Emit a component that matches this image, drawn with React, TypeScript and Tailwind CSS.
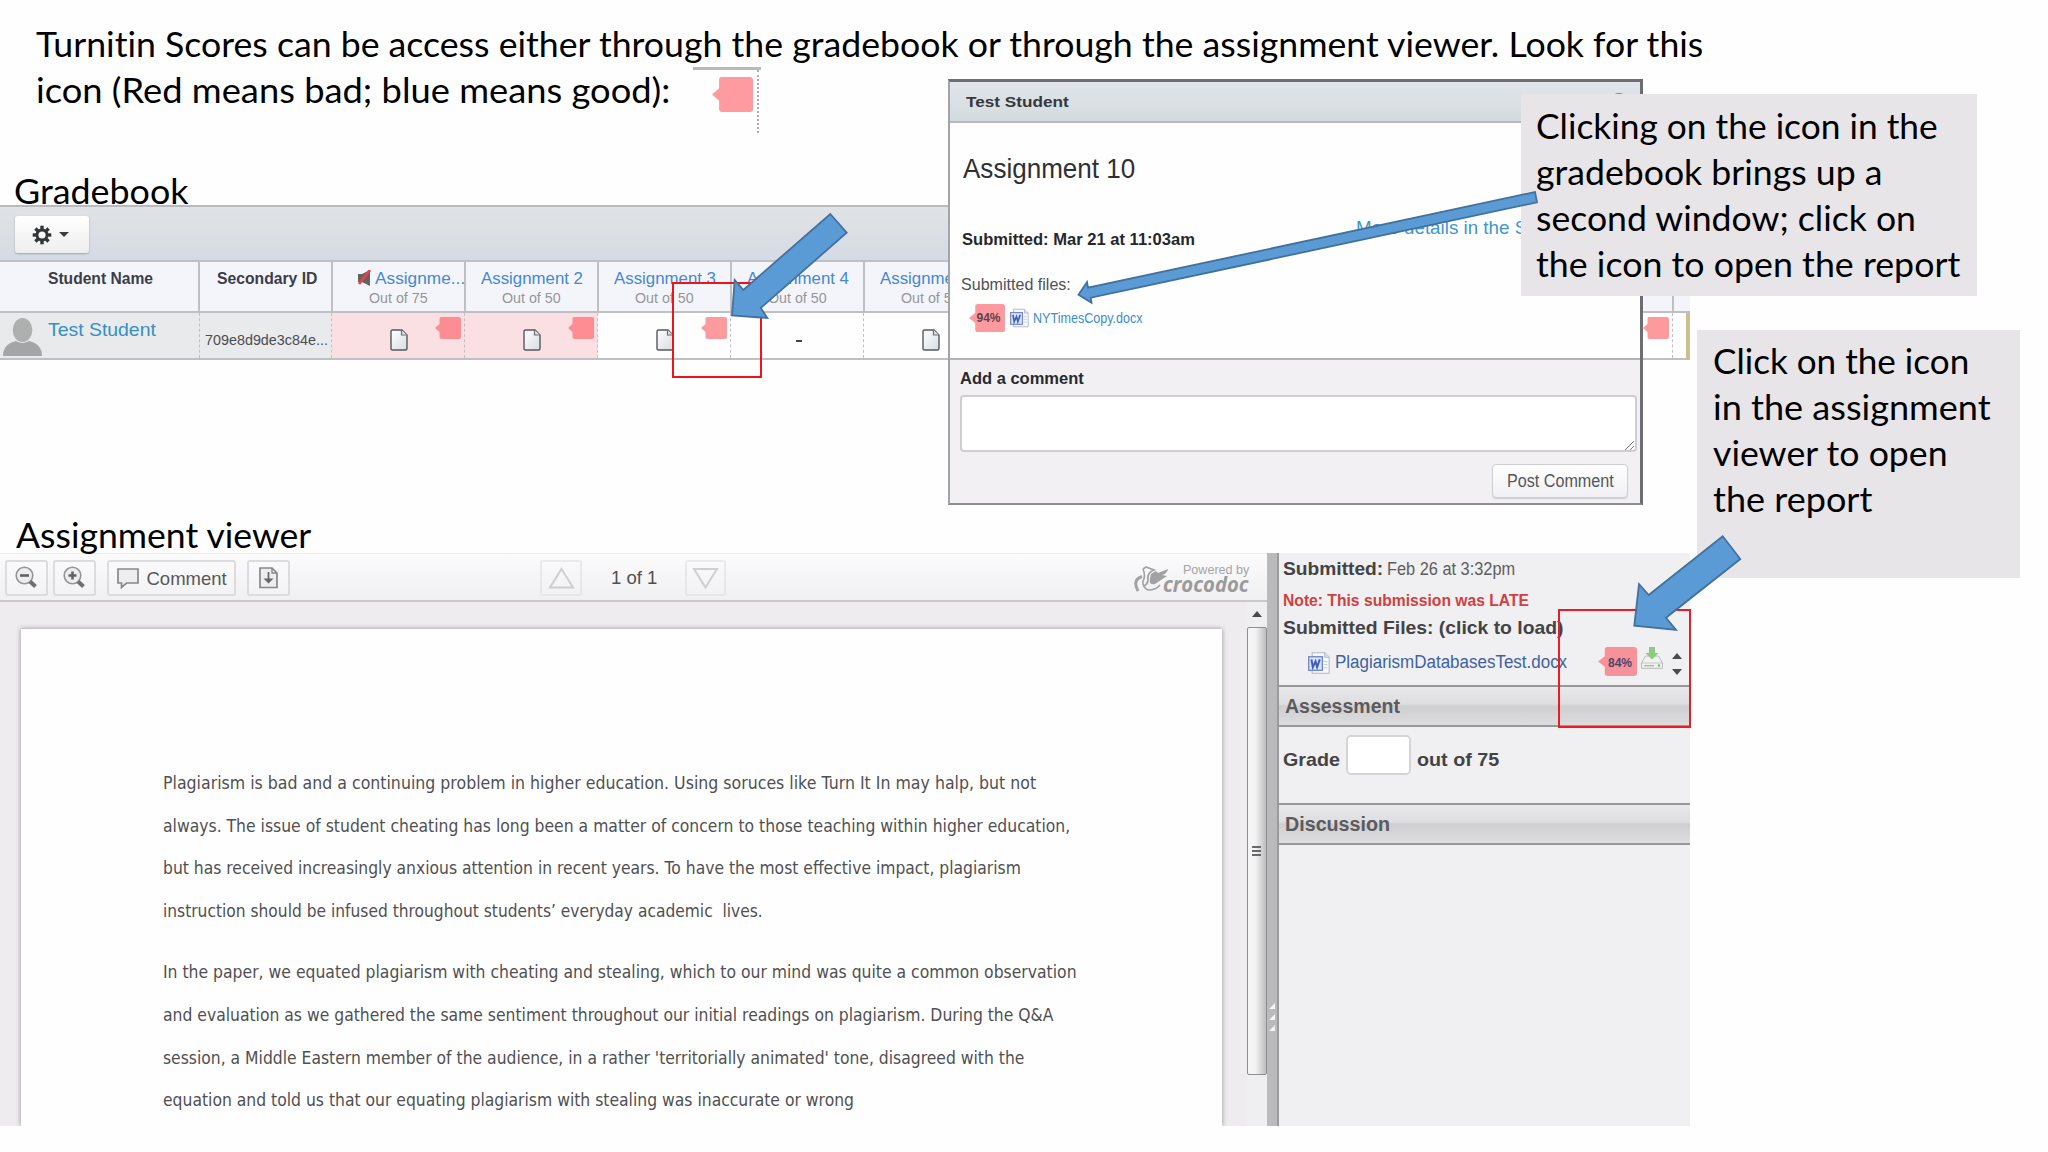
import { useLayoutEffect, useRef, useState } from "react";
import type { ReactNode } from "react";

/* One line of text stretched horizontally to a given width. */
function Fit({ w, className = "", children }: { w: number; className?: string; children: ReactNode }) {
  const ref = useRef<HTMLSpanElement>(null);
  const [scale, setScale] = useState(1);
  useLayoutEffect(() => {
    if (ref.current) setScale(w / ref.current.offsetWidth);
  }, [w]);
  return (
    <span className={"block shrink-0 whitespace-pre " + className} style={{ width: w }}>
      <span ref={ref} className="inline-block origin-left align-top" style={{ transform: `scaleX(${scale})` }}>
        {children}
      </span>
    </span>
  );
}

const slideText = "font-['Lato'] text-[34px] leading-[46px] text-black [font-variant-ligatures:none]";

/* Score flag: rounded square with a pointer on its left side. */
function Flag({ className, color = "#fd9297" }: { className: string; color?: string }) {
  return (
    <svg viewBox="0 0 26 22" preserveAspectRatio="none" className={className}>
      <path
        d="M6 0H24Q26 0 26 2V20Q26 22 24 22H6.500Q4.500 22 4.500 20V15L0 11L4.500 7V2Q4.500 0 6 0Z"
        fill={color}
      />
    </svg>
  );
}

function DocIcon({ className }: { className: string }) {
  return (
    <svg viewBox="0 0 18 22" className={className}>
      <defs>
        <linearGradient id="sheet" x1="0" y1="0" x2="1" y2="1">
          <stop offset="0" stopColor="#ffffff" />
          <stop offset="1" stopColor="#d6dde2" />
        </linearGradient>
      </defs>
      <path d="M2.500 1H12L17 6V19.500Q17 21 15.500 21H2.500Q1 21 1 19.500V2.500Q1 1 2.500 1Z" fill="url(#sheet)" stroke="#55595c" strokeWidth="1.400" />
      <path d="M11.500 1V6H17" fill="#dfe3e6" stroke="#6d7174" strokeWidth="1.200" />
    </svg>
  );
}

function WordIcon({ className }: { className: string }) {
  return (
    <svg viewBox="0 0 21 21" className={className}>
      <path d="M4 .8H16L20.200 5V20.200H4Z" fill="#f7f8fb" stroke="#b4b8c4" />
      <path d="M16 .8V5H20.200" fill="#dfe2ea" stroke="#b4b8c4" />
      <path d="M15 9H18.500M15 12H18.500M15 15H18.500" stroke="#c5cbdc" />
      <rect x=".7" y="4.500" width="13" height="13" fill="#dbe5fb" stroke="#6f8ad4" strokeWidth="1.300" />
      <path d="M3.300 7L4.600 14.500L7.200 9L8.700 14.500L11.300 7" fill="none" stroke="#4560b8" strokeWidth="1.900" />
    </svg>
  );
}

function HeadCell({ label, w, points, muted }: { label: string; w: number; points: string; muted?: boolean }) {
  return (
    <div className="flex h-full w-[133px] shrink-0 flex-col items-center border-r-2 border-[#bfc0c3] pt-[6.5px]">
      <div className={muted ? "flex w-full items-center gap-[4px] pl-[25px]" : "flex items-center"}>
        {muted && (
          <svg viewBox="0 0 13 16" className="h-4 w-[13px] shrink-0">
            <path d="M0 4H4L12 0V16L4 12H0Z" fill="#66625f" />
            <path d="M12 0L1 14" stroke="#e0454a" strokeWidth="2.800" />
          </svg>
        )}
        <Fit w={w} className="text-[16.500px] leading-5 text-[#4588d8]">{label}</Fit>
      </div>
      <Fit w={59} className="mt-[2.5px] text-[14px] leading-4 text-[#94959a]">{points}</Fit>
    </div>
  );
}

function BodyCell({ late, empty }: { late?: boolean; empty?: boolean }) {
  return (
    <div
      className={
        "flex h-full w-[133px] shrink-0 items-start border-r border-dashed border-[#c4c0c2] " +
        (late ? "bg-[#fbe0e3]" : "bg-[#fefefe]")
      }
    >
      {empty ? (
        <span className="ml-[65px] mt-[27px] block h-[2px] w-[6px] bg-[#444]" />
      ) : (
        <>
          <DocIcon className="ml-[57.5px] mt-4 h-[22px] w-[18px]" />
          <Flag className="ml-[27.500px] mt-[4px] h-[22px] w-[26px]" color={late ? "#fd8d93" : "#fd9a9e"} />
        </>
      )}
    </div>
  );
}

function Gradebook() {
  return (
    <section className="flex h-[155px] w-[1690px] shrink-0 flex-col border-t-2 border-[#b9babd] bg-white">
      <div className="flex h-[53px] shrink-0 items-start bg-linear-to-b from-[#e0e3e5] to-[#d5dbe4] pl-[15px] pt-[9px]">
        <div className="flex h-[37px] w-[74px] items-center justify-center gap-[7px] rounded-[3px] bg-linear-to-b from-white to-[#eeeeef] pr-[4px] shadow-[0_1px_2px_rgba(0,0,0,0.25)]">
          <svg viewBox="-10 -10 20 20" className="h-5 w-5">
            <g fill="#343536">
              <circle r="6.500" />
              <rect x="-1.700" y="-9.300" width="3.400" height="18.600" />
              <rect x="-9.300" y="-1.700" width="18.600" height="3.400" />
              <rect x="-1.700" y="-9.300" width="3.400" height="18.600" transform="rotate(45)" />
              <rect x="-1.700" y="-9.300" width="3.400" height="18.600" transform="rotate(-45)" />
            </g>
            <circle r="3.600" fill="#f8f8f8" />
          </svg>
          <svg viewBox="0 0 10 5" className="h-[5px] w-[10px]">
            <path d="M0 0H10L5 5Z" fill="#3c3c3c" />
          </svg>
        </div>
      </div>
      <div className="flex h-[53px] shrink-0 overflow-hidden border-y-2 border-[#bfc0c3] bg-[#f4f5fa] font-bold">
        <div className="flex h-full w-[200px] shrink-0 border-r-2 border-[#bfc0c3] pl-[48px] pt-[5.5px]">
          <Fit w={105} className="text-[16.500px] leading-5 text-[#3b3d48]">Student Name</Fit>
        </div>
        <div className="flex h-full w-[133px] shrink-0 border-r-2 border-[#bfc0c3] pl-[16.500px] pt-[5.5px]">
          <Fit w={100} className="text-[16.500px] leading-5 text-[#3b3d48]">Secondary ID</Fit>
        </div>
        <div className="-mt-px flex font-normal">
          <HeadCell label="Assignme..." w={90} points="Out of 75" muted />
          <HeadCell label="Assignment 2" w={102} points="Out of 50" />
          <HeadCell label="Assignment 3" w={102} points="Out of 50" />
          <HeadCell label="Assignment 4" w={102} points="Out of 50" />
          <HeadCell label="Assignment 5" w={102} points="Out of 50" />
        </div>
        <div className="ml-auto mr-[16px] w-[2px] bg-[#bfc0c3]" />
      </div>
      <div className="flex h-[47px] shrink-0 border-b-2 border-[#bfc0c3]">
        <div className="flex h-full w-[199px] shrink-0 items-start bg-[#e9eaec] pl-[3px] pt-[5px]">
          <svg viewBox="0 0 39 38" className="h-[38px] w-[39px]">
            <ellipse cx="19.500" cy="12" rx="9.800" ry="12" fill="#aeafaf" />
            <path d="M0 38Q0 26 13 23Q19.500 27 26 23Q39 26 39 38Z" fill="#a4a5a6" />
          </svg>
          <Fit w={108} className="ml-[6px] mt-[1.500px] text-[18.500px] leading-5 text-[#3490c6]">Test Student</Fit>
        </div>
        <div className="flex h-full w-[133px] shrink-0 border-x border-dashed border-[#c4c0c2] bg-[#e9eaec] pl-[5px] pt-[16.500px]">
          <Fit w={123} className="text-[14px] leading-5 text-[#4c4d50]">709e8d9de3c84e...</Fit>
        </div>
        <BodyCell late />
        <BodyCell late />
        <BodyCell />
        <BodyCell empty />
        <BodyCell />
        <div className="ml-auto flex h-full items-start">
          <Flag className="mt-[4px] h-[22px] w-[26px]" color="#fd9a9e" />
          <div className="ml-[3px] h-full border-l border-dashed border-[#c4c0c2]" />
          <div className="ml-[13px] h-[47px] w-1 bg-[#cbc08e]" />
        </div>
      </div>
    </section>
  );
}

function SubmissionDialog() {
  return (
    <section className="absolute left-[948px] top-[79px] flex h-[425.5px] w-[695px] flex-col border-b-2 border-l-2 border-r-[3px] border-t-[3px] border-b-[#8e8d91] border-l-[#a3a4a9] border-r-[#6e6e72] border-t-[#6e6e72] bg-[#fefefe]">
      <header className="flex h-[41px] shrink-0 items-start border-b-2 border-[#b5b9bd] bg-linear-to-b from-[#e1e5ec] to-[#d4dbde] pl-[16px] pt-[10px]">
        <Fit w={103} className="text-[15.500px] font-bold leading-5 text-[#35383c]">Test Student</Fit>
        <span className="ml-auto mr-[13px] mt-px block h-4 w-4 rounded-full border-2 border-[#7b7f84]" />
      </header>
      <div className="flex h-[237px] shrink-0 flex-col border-b-2 border-[#b3b2b6] pl-[12px]">
        <Fit w={172} className="ml-px mt-[30px] text-[28px] leading-[32px] text-[#2f3033]">Assignment 10</Fit>
        <div className="mt-[33px] flex h-[36px] items-start">
          <Fit w={233} className="mt-[10.500px] text-[16.500px] font-bold leading-5 text-[#26272a]">Submitted: Mar 21 at 11:03am</Fit>
          <Fit w={171} className="ml-[161px] mt-[-0.500px] text-[19px] leading-5 text-[#3f97d2]">More details in the S</Fit>
        </div>
        <Fit w={110} className="-ml-px mt-[20px] text-[16.500px] leading-5 text-[#505155]">Submitted files:</Fit>
        <div className="mt-[10px] flex items-center pl-[7px]">
          <span className="relative flex h-7 w-9 items-center">
            <Flag className="absolute inset-0 h-7 w-9" color="#fd999f" />
            <Fit w={24} className="relative ml-[7.5px] text-[12px] font-bold leading-4 text-[#61414a]">94%</Fit>
          </span>
          <WordIcon className="ml-[5px] h-[20px] w-[19px]" />
          <Fit w={110} className="ml-[4px] text-[14.500px] leading-5 text-[#3a8fd0]">NYTimesCopy.docx</Fit>
        </div>
      </div>
      <footer className="flex grow flex-col bg-[#f2f0f3] pl-[10px] pr-[3px]">
        <Fit w={124} className="mt-[7.500px] text-[16.500px] font-bold leading-5 text-[#2a2a2d]">Add a comment</Fit>
        <div className="mt-[7px] flex h-[57px] shrink-0 items-end justify-end rounded-[4px] border-2 border-[#cfcdd2] bg-white">
          <svg viewBox="0 0 10 10" className="h-[10px] w-[10px]">
            <path d="M0 10L9 1M5 10L9 6" stroke="#777" strokeWidth="1" />
          </svg>
        </div>
        <div className="ml-auto mr-[9px] mt-[12px] flex h-[34px] w-[136px] items-center justify-center rounded-[4px] border border-[#cfced2] bg-linear-to-b from-white to-[#f0eff2] shadow-[0_1px_1px_rgba(0,0,0,0.15)]">
          <Fit w={107} className="ml-px text-[17.500px] leading-5 text-[#55565a]">Post Comment</Fit>
        </div>
      </footer>
    </section>
  );
}

const toolButton =
  "flex h-9 shrink-0 items-center justify-center rounded-[3px] border-2 border-[#dcdbde] bg-linear-to-b from-[#fafafb] to-[#f3f2f4]";

function Magnifier({ plus }: { plus?: boolean }) {
  return (
    <svg viewBox="0 0 22 22" className="-ml-[2px] -mt-[2px] h-[22px] w-[22px]">
      <circle cx="9.500" cy="9.500" r="8.300" fill="#ededee" stroke="#959597" strokeWidth="1.600" />
      <path d="M15 15.500L20.500 20.500" stroke="#6f6f71" strokeWidth="4" />
      <path d={plus ? "M5.500 9.500H13.500M9.500 5.500V13.500" : "M5 9.500H14"} stroke="#626264" strokeWidth="2.600" />
    </svg>
  );
}

function ViewerToolbar() {
  return (
    <div className="flex h-[49px] shrink-0 items-start border-b-2 border-t border-b-[#c9c8cb] border-t-[#ececee] bg-linear-to-b from-[#fbfbfc] to-[#f0eff1] pl-[5px] pt-[6px]">
      <div className={toolButton + " w-[43px]"}><Magnifier /></div>
      <div className={toolButton + " ml-[5px] w-[43px]"}><Magnifier plus /></div>
      <div className={toolButton + " ml-[11px] w-[129px] gap-[8px]"}>
        <svg viewBox="0 0 22 22" className="-mt-px h-[22px] w-[22px]">
          <path d="M1 2H21V16H9.500L4.500 20.500V16H1Z" fill="#ededee" stroke="#88888a" strokeWidth="1.700" />
        </svg>
        <Fit w={80} className="mt-px text-[18.500px] leading-5 text-[#58585b]">Comment</Fit>
      </div>
      <div className={toolButton + " ml-[11px] w-[43px]"}>
        <svg viewBox="0 0 19 22" className="-ml-px -mt-px h-[22px] w-[19px]">
          <path d="M1 1H13L18 6V20.500H1Z" fill="#ededee" stroke="#88888a" strokeWidth="1.700" />
          <path d="M13 1V6H18" fill="none" stroke="#88888a" strokeWidth="1.400" />
          <path d="M9.500 5V13" stroke="#666" strokeWidth="1.700" />
          <path d="M4.500 11.500H14.500L9.500 16.500Z" fill="#666" />
        </svg>
      </div>
      <div className={toolButton + " ml-[250px] w-[42px] opacity-50"}>
        <svg viewBox="0 0 27 22" className="h-[22px] w-[27px]">
          <path d="M13.500 2L25 20.500H2Z" fill="none" stroke="#a9a9ab" strokeWidth="2" />
        </svg>
      </div>
      <Fit w={46} className="ml-[29px] mt-[8px] text-[18.500px] leading-5 text-[#505053]">1 of 1</Fit>
      <div className={toolButton + " ml-[28px] w-[41px] opacity-50"}>
        <svg viewBox="0 0 27 22" className="h-[22px] w-[27px]">
          <path d="M13.500 20.500L25 2H2Z" fill="none" stroke="#a9a9ab" strokeWidth="2" />
        </svg>
      </div>
      <div className="ml-auto mr-[18px] mt-[3px] flex items-start">
        <svg viewBox="0 0 34 26" className="mt-[3px] h-[26px] w-[34px]">
          <g fill="none" stroke="#a2a2a4">
            <path d="M4 25Q-2 14 8 10.500" strokeWidth="3" />
            <path d="M9 3L12 1L20 4Q13 7 14 13Q14 18 10 20" strokeWidth="1.800" />
            <path d="M9 3Q12 10 9 15Q8 21 14 24Q22 24 26 19" strokeWidth="1.600" />
          </g>
          <path d="M17 8L22 5L24 7L34 3Q33 8 28 9L33 10Q27 14 21 18Q13 20 17 8Z" fill="#a2a2a4" />
        </svg>
        <div className="-ml-[4px] flex w-[85px] flex-col items-end">
          <Fit w={66} className="-mt-px text-[13.5px] leading-4 text-[#a5a5a7]">Powered by</Fit>
          <Fit w={86} className="-mt-[4px] font-['Open_Sans'] text-[21px] font-bold italic leading-5 text-[#9b9b9d]">crocodoc</Fit>
        </div>
      </div>
    </div>
  );
}

const paragraphs: { text: string; w: number }[][] = [
  [
    { text: "Plagiarism is bad and a continuing problem in higher education. Using soruces like Turn It In may halp, but not", w: 873 },
    { text: "always. The issue of student cheating has long been a matter of concern to those teaching within higher education,", w: 907 },
    { text: "but has received increasingly anxious attention in recent years. To have the most effective impact, plagiarism", w: 858 },
    { text: "instruction should be infused throughout students’ everyday academic  lives.", w: 600 },
  ],
  [
    { text: "In the paper, we equated plagiarism with cheating and stealing, which to our mind was quite a common observation", w: 914 },
    { text: "and evaluation as we gathered the same sentiment throughout our initial readings on plagiarism. During the Q&A", w: 890 },
    { text: "session, a Middle Eastern member of the audience, in a rather 'territorially animated' tone, disagreed with the", w: 861 },
    { text: "equation and told us that our equating plagiarism with stealing was inaccurate or wrong", w: 691 },
  ],
];

function DocumentArea() {
  return (
    <div className="flex min-h-0 grow bg-[#eeecef]">
      <div className="ml-[21px] mt-[27px] flex w-[1201px] flex-col bg-[#fefefe] pl-[141.5px] pt-[133px] shadow-[0_0_5px_rgba(0,0,0,0.4)]">
        {paragraphs.map((lines, i) => (
          <div key={i} className="mb-[19px] flex flex-col">
            {lines.map((line) => (
              <Fit key={line.text} w={line.w} className="font-['DejaVu_Sans'] text-[17px] leading-[42.6px] text-[#505053]">
                {line.text}
              </Fit>
            ))}
          </div>
        ))}
      </div>
      <div className="ml-auto flex w-5 flex-col items-center bg-[#efeef1]">
        <svg viewBox="0 0 10 6" className="mt-[9px] h-[6px] w-[10px]">
          <path d="M5 0L10 6H0Z" fill="#4a4a4c" />
        </svg>
        <div className="mt-[10px] flex h-[448px] w-5 items-center justify-center rounded-[2px] border border-[#8f8f92] bg-linear-to-r from-[#f4f4f5] from-40% to-[#bdbdc0] pr-[2px]">
          <div className="flex flex-col gap-[2px]">
            <span className="block h-[2px] w-[9px] bg-[#69696c]" />
            <span className="block h-[2px] w-[9px] bg-[#69696c]" />
            <span className="block h-[2px] w-[9px] bg-[#69696c]" />
          </div>
        </div>
      </div>
    </div>
  );
}

function SectionBar({ title, w }: { title: string; w: number }) {
  return (
    <div className="flex h-[42px] shrink-0 items-start border-y-2 border-[#98989b] bg-[linear-gradient(#e9e8ea_0%,#dedddf_45%,#cfced1_50%,#dddcde_100%)] pl-[6px] pt-[8.5px]">
      <Fit w={w} className="text-[19.500px] font-bold leading-5 text-[#5b5b5e]">{title}</Fit>
    </div>
  );
}

function Sidebar() {
  const bold = "text-[19px] font-bold leading-5 text-[#434346]";
  return (
    <aside className="flex w-[411px] shrink-0 flex-col bg-[#f0eff1]">
      <div className="flex h-[132px] shrink-0 flex-col pl-[4px] pt-[5.500px]">
        <div className="flex gap-[4px]">
          <Fit w={100} className={bold}>Submitted:</Fit>
          <Fit w={128} className="text-[17.500px] leading-5 text-[#5d5d60]">Feb 26 at 3:32pm</Fit>
        </div>
        <Fit w={246} className="mt-[12px] text-[17px] font-bold leading-5 text-[#d2403f]">Note: This submission was LATE</Fit>
        <Fit w={281} className={bold + " mt-[7.500px]"}>Submitted Files: (click to load)</Fit>
        <div className="mt-[9.500px] flex items-start pl-[25px]">
          <WordIcon className="mt-[4px] h-[22px] w-[22px]" />
          <Fit w={232} className="ml-[4.500px] mt-[4px] text-[18px] leading-5 text-[#3d62a3]">PlagiarismDatabasesTest.docx</Fit>
          <span className="relative ml-[31.500px] mt-[-0.500px] flex h-[29px] w-[39px] items-center">
            <Flag className="absolute inset-0 h-[29px] w-[39px]" color="#f79398" />
            <Fit w={24} className="relative ml-[10px] mt-[2px] text-[12px] font-bold leading-4 text-[#4c4470]">84%</Fit>
          </span>
          <svg viewBox="0 0 22 22" className="ml-[4px] mt-[-0.500px] h-[22px] w-[22px]">
            <path d="M4.500 9H17.500L21.500 16V21.300H.5V16Z" fill="#f1f2f2" stroke="#b7bcbc" />
            <path d="M.5 16H21.500" stroke="#c4c9c9" />
            <path d="M3 18.700H13" stroke="#b1b6b6" strokeWidth="1.500" />
            <circle cx="18" cy="18.500" r="1.200" fill="#65c27b" />
            <path d="M8 0H14V6H17.500L11 12.500L4.500 6H8Z" fill="#8dcc7f" />
          </svg>
          <svg viewBox="0 0 10 22" className="ml-[9px] mt-[5px] h-[22px] w-[10px]">
            <path d="M5 0L10 6H0ZM5 22L10 16H0Z" fill="#4b4b4d" />
          </svg>
        </div>
      </div>
      <SectionBar title="Assessment" w={115} />
      <div className="flex h-[76px] shrink-0 items-start pl-[4px] pt-[8px]">
        <Fit w={57} className={bold + " mt-[15px]"}>Grade</Fit>
        <div className="ml-[6px] h-[40px] w-[65px] rounded-[5px] border-2 border-[#d5d4d7] bg-white" />
        <Fit w={82} className={bold + " ml-[5.500px] mt-[15px]"}>out of 75</Fit>
      </div>
      <SectionBar title="Discussion" w={105} />
    </aside>
  );
}

function Viewer() {
  return (
    <section className="flex h-[573px] w-[1690px] shrink-0 overflow-hidden">
      <div className="flex w-[1267px] shrink-0 flex-col">
        <ViewerToolbar />
        <DocumentArea />
      </div>
      <div className="flex w-[12px] shrink-0 flex-col items-center border-r-2 border-[#9a999c] bg-[#bab9bc] pt-[450px]">
        <svg viewBox="0 0 6 28" className="h-[28px] w-[6px]">
          <path d="M6 0V6H0ZM6 11V17H0ZM6 22V28H0Z" fill="#f5f5f6" />
        </svg>
      </div>
      <Sidebar />
    </section>
  );
}

function Callout({ className, lines }: { className: string; lines: { text: string; w: number }[] }) {
  return (
    <div className={"absolute flex flex-col bg-[#e7e5e8] " + className}>
      {lines.map((line) => (
        <Fit key={line.text} w={line.w} className={slideText}>{line.text}</Fit>
      ))}
    </div>
  );
}

export default function App() {
  return (
    <main className="relative flex h-[1152px] w-[2048px] flex-col overflow-hidden bg-[#fefefe] font-['Liberation_Sans',sans-serif]">
      <header className="flex h-[167px] shrink-0 flex-col pl-[35.500px] pt-[20.500px]">
        <Fit w={1667} className={slideText}>
          Turnitin Scores can be access either through the gradebook or through the assignment viewer. Look for this
        </Fit>
        <div className="flex items-start">
          <Fit w={634} className={slideText}>icon (Red means bad; blue means good):</Fit>
          <div className="ml-[23px] flex h-[66px] w-[68px] border-t-[3px] border-[#b9b8ba]">
            <Flag className="ml-[19px] mt-[7px] h-[35px] w-[41px]" color="#fe9ba0" />
            <div className="ml-[4px] h-full border-l-2 border-dotted border-[#b8a9ac]" />
          </div>
        </div>
      </header>
      <h2 className="relative z-10 h-[38px] shrink-0 pl-[14px] pt-px">
        <Fit w={174} className={slideText}>Gradebook</Fit>
      </h2>
      <Gradebook />
      <h2 className="relative z-10 mt-[151px] h-[42px] shrink-0 pl-[15.500px] pt-px">
        <Fit w={295} className={slideText}>Assignment viewer</Fit>
      </h2>
      <Viewer />

      <SubmissionDialog />
      <Callout
        className="left-[1521px] top-[94px] h-[202px] w-[456px] pl-[14.500px] pt-[9px]"
        lines={[
          { text: "Clicking on the icon in the", w: 402 },
          { text: "gradebook brings up a", w: 347 },
          { text: "second window; click on", w: 380 },
          { text: "the icon to open the report", w: 424 },
        ]}
      />
      <Callout
        className="left-[1697px] top-[330px] h-[248px] w-[323px] pl-[15.500px] pt-[8px]"
        lines={[
          { text: "Click on the icon", w: 256 },
          { text: "in the assignment", w: 278 },
          { text: "viewer to open", w: 235 },
          { text: "the report", w: 159 },
        ]}
      />
      <div className="absolute left-[672px] top-[282px] h-[96px] w-[90px] border-2 border-[#f0131a]" />
      <div className="absolute left-[1557.500px] top-[609px] h-[119px] w-[133px] border-2 border-[#ea1c24]" />
      <svg viewBox="0 0 2048 1152" className="pointer-events-none absolute inset-0 h-full w-full">
        <g fill="#5b9bd5" stroke="#41719c" strokeWidth="1.800" strokeLinejoin="miter">
          <path d="M830.300 214L846.700 232.700L760.700 308L767.300 318L732 315.300L734.700 280L743.300 290Z" />
          <path d="M1535 192L1537 202.300L1090.800 297.700L1091.500 302.700L1078.500 294.700L1087 282L1088 287.700Z" />
          <path d="M1722.700 536.300L1740.300 559L1666 617.700L1676 630L1634.300 625.700L1639 584L1648.700 595Z" />
        </g>
      </svg>
    </main>
  );
}
